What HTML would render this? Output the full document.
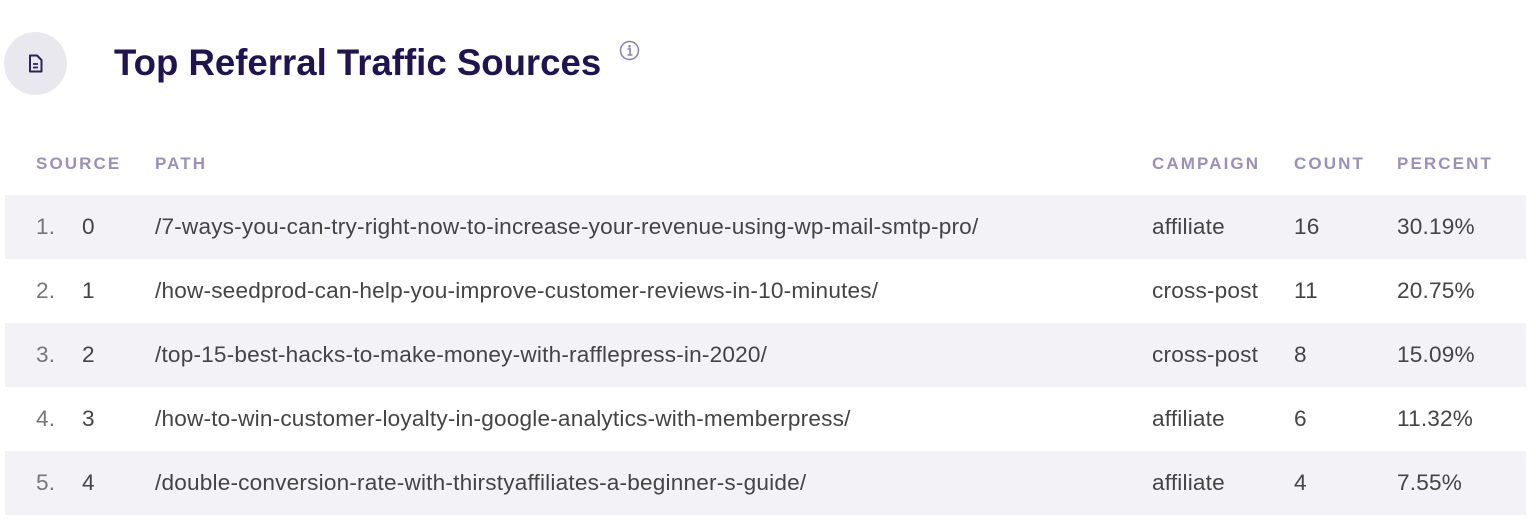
<!DOCTYPE html>
<html><head><meta charset="utf-8"><style>
body{margin:0;width:1536px;height:521px;background:#fff;font-family:"Liberation Sans",sans-serif;position:relative;overflow:hidden}
.circ{position:absolute;left:4px;top:32px;width:63px;height:63px;border-radius:50%;background:#e9e8ef}
h1{position:absolute;left:114px;top:42px;margin:0;font-size:36.6px;font-weight:bold;color:#1f1450;white-space:nowrap}
.info{position:absolute;left:619px;top:40px}
.hd{position:absolute;top:154px;font-size:17px;font-weight:bold;letter-spacing:2.1px;color:#9c90b8}
.row{position:absolute;left:5px;width:1521px;height:64px}
.row.s{background:#f3f2f7}
.row span{position:absolute;top:19px;font-size:22.6px;color:#444;white-space:nowrap;letter-spacing:0.19px}
.row .n{color:#777}
</style></head><body>
<div class="circ"><svg style="position:absolute;left:23px;top:22px" width="17" height="19" viewBox="0 0 17 19"><path d="M3 1.5h7l4.5 4.5v11.5h-11.5z" fill="none" stroke="#2a2550" stroke-width="2" stroke-linejoin="round"/><path d="M6 10h5M6 13.5h5" stroke="#2a2550" stroke-width="1.8"/></svg></div>
<h1>Top Referral Traffic Sources</h1>
<svg class="info" width="21" height="21" viewBox="0 0 21 21"><circle cx="10.5" cy="10.5" r="9" fill="none" stroke="#8a80a8" stroke-width="1.5"/><circle cx="10.5" cy="6.3" r="1.3" fill="#8a80a8"/><path d="M8.5 9h2.6v5.5M8.5 15h5" stroke="#8a80a8" stroke-width="1.6" fill="none"/></svg>
<div class="hd" style="left:36px">SOURCE</div>
<div class="hd" style="left:155px">PATH</div>
<div class="hd" style="left:1152px">CAMPAIGN</div>
<div class="hd" style="left:1294px">COUNT</div>
<div class="hd" style="left:1397px">PERCENT</div>

<div class="row s" style="top:195px"><span class="n" style="left:31px">1.</span><span style="left:77px">0</span><span style="left:150px">/7-ways-you-can-try-right-now-to-increase-your-revenue-using-wp-mail-smtp-pro/</span><span style="left:1147px">affiliate</span><span style="left:1289px">16</span><span style="left:1392px">30.19%</span></div>
<div class="row" style="top:259px"><span class="n" style="left:31px">2.</span><span style="left:77px">1</span><span style="left:150px">/how-seedprod-can-help-you-improve-customer-reviews-in-10-minutes/</span><span style="left:1147px">cross-post</span><span style="left:1289px">11</span><span style="left:1392px">20.75%</span></div>
<div class="row s" style="top:323px"><span class="n" style="left:31px">3.</span><span style="left:77px">2</span><span style="left:150px">/top-15-best-hacks-to-make-money-with-rafflepress-in-2020/</span><span style="left:1147px">cross-post</span><span style="left:1289px">8</span><span style="left:1392px">15.09%</span></div>
<div class="row" style="top:387px"><span class="n" style="left:31px">4.</span><span style="left:77px">3</span><span style="left:150px">/how-to-win-customer-loyalty-in-google-analytics-with-memberpress/</span><span style="left:1147px">affiliate</span><span style="left:1289px">6</span><span style="left:1392px">11.32%</span></div>
<div class="row s" style="top:451px"><span class="n" style="left:31px">5.</span><span style="left:77px">4</span><span style="left:150px">/double-conversion-rate-with-thirstyaffiliates-a-beginner-s-guide/</span><span style="left:1147px">affiliate</span><span style="left:1289px">4</span><span style="left:1392px">7.55%</span></div>
</body></html>
